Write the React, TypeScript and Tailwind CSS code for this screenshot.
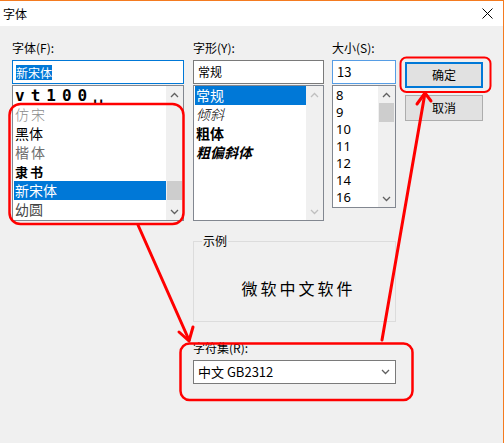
import React from "react";

function Chevron({ up, color }: { up?: boolean; color: string }) {
  return (
    <svg width="9" height="6" viewBox="0 0 9 6" className="block">
      <path
        d={up ? "M1 5 L4.5 1.5 L8 5" : "M1 1 L4.5 4.5 L8 1"}
        fill="none"
        stroke={color}
        strokeWidth="1.3"
      />
    </svg>
  );
}

function ScrollBar({
  color,
  thumbTop,
  thumb,
}: {
  color: string;
  thumbTop?: string;
  thumb?: boolean;
}) {
  return (
    <div className="flex w-[17px] shrink-0 flex-col bg-[#f0f0f0]">
      <div className="flex h-[17px] items-center justify-center">
        <Chevron up color={color} />
      </div>
      <div className="flex-1">
        {thumb && <div className={`${thumbTop} mx-[1px] h-[19px] bg-[#cdcdcd]`} />}
      </div>
      <div className="flex h-[17px] items-center justify-center">
        <Chevron color={color} />
      </div>
    </div>
  );
}

const fontItems = [
  { name: "仿宋", cls: "text-[#8a8a8a] font-light tracking-[2px]" },
  { name: "黑体", cls: "text-black" },
  { name: "楷体", cls: "text-[#6f6f6f] tracking-[2px]" },
  { name: "隶书", cls: "font-bold tracking-[2px] text-[13px]" },
  { name: "新宋体", cls: "bg-[#0078d7] text-white", selected: true },
  { name: "幼圆", cls: "text-[#444]" },
];

const styleItems = [
  { name: "常规", cls: "bg-[#0078d7] text-white" },
  { name: "倾斜", cls: "italic font-light" },
  { name: "粗体", cls: "font-bold" },
  { name: "粗偏斜体", cls: "font-bold italic" },
];

const sizes = ["8", "9", "10", "11", "12", "14", "16"];

export default function App() {
  return (
    <div className="relative h-[443px] w-[504px] overflow-hidden border-t border-r border-[#f47b20] bg-[#f0f0f0] font-['Noto_Sans_CJK_SC','Noto_Sans',sans-serif] text-[12px] leading-[16px] text-black">
      <div className="flex h-[25px] items-center justify-between bg-white pl-[3px] pr-[10px]">
        <span>字体</span>
        <svg width="11" height="11" viewBox="0 0 11 11">
          <path d="M0.5 0.5 L10.5 10.5 M10.5 0.5 L0.5 10.5" stroke="#000" strokeWidth="1" />
        </svg>
      </div>

      <div className="pl-[12px] pt-[14px]">
        <div className="flex">
          {/* font */}
          <div className="w-[172px]">
            <div className="mb-[4px] h-[16px]">字体(F):</div>
            <div className="flex h-[24px] items-center border border-[#0078d7] bg-white pl-[3px]">
              <span className="bg-[#0078d7] leading-[15px] text-white">新宋体</span>
            </div>
            <div className="mt-[1px] flex h-[136px] border border-[#828790] bg-white">
              <div className="flex-1 pl-[1px] text-[14px] leading-[19px]">
                <div className="h-[19px] overflow-hidden pl-[1px] font-['DejaVu_Sans_Mono',monospace] text-[16px] font-bold leading-[19px] tracking-[6px]">
                  vt100␣
                </div>
                {fontItems.map((f) => (
                  <div key={f.name} className={`h-[19px] pl-[1px] ${f.cls}`}>
                    {f.name}
                  </div>
                ))}
              </div>
              <ScrollBar color="#606060" thumb thumbTop="mt-[78px]" />
            </div>
          </div>

          {/* style */}
          <div className="ml-[9px] w-[131px]">
            <div className="mb-[4px] h-[16px]">字形(Y):</div>
            <div className="flex h-[24px] items-center border border-[#7a7a7a] bg-white pl-[4px]">
              常规
            </div>
            <div className="mt-[1px] flex h-[136px] border border-[#828790] bg-white">
              <div className="flex-1 pl-[1px] text-[14px] leading-[19px]">
                {styleItems.map((s) => (
                  <div key={s.name} className={`h-[19px] pl-[1px] ${s.cls}`}>
                    {s.name}
                  </div>
                ))}
              </div>
              <ScrollBar color="#bfbfbf" />
            </div>
          </div>

          {/* size */}
          <div className="ml-[8px] w-[64px]">
            <div className="mb-[4px] h-[16px]">大小(S):</div>
            <div className="flex h-[24px] items-center border border-[#569de5] bg-white pl-[4px] text-[13px]">
              13
            </div>
            <div className="mt-[1px] flex h-[123px] border border-[#828790] bg-white">
              <div className="flex-1 pl-[3px] pt-[1px] font-['Noto_Sans',sans-serif] text-[13px] leading-[17px]">
                {sizes.map((s) => (
                  <div key={s} className="h-[17px]">
                    {s}
                  </div>
                ))}
              </div>
              <ScrollBar color="#606060" thumb thumbTop="mt-0" />
            </div>
          </div>

          {/* buttons */}
          <div className="ml-[9px] mt-[22px] flex w-[78px] flex-col gap-[7px]">
            <button className="flex h-[26px] items-center justify-center border-2 border-[#0078d7] bg-[#e1e1e1]">
              确定
            </button>
            <button className="flex h-[26px] items-center justify-center border border-[#adadad] bg-[#e1e1e1]">
              取消
            </button>
          </div>
        </div>

        <div className="ml-[181px] mt-[12px] w-[203px]">
          <fieldset className="h-[89px] border border-[#dcdcdc] pl-[8px]">
            <legend className="px-[1px]">示例</legend>
            <div className="flex h-[72px] items-center justify-center pt-[6px] text-[16px] tracking-[3px]">
              微软中文软件
            </div>
          </fieldset>

          <div className="mt-[18px] h-[16px]">字符集(R):</div>
          <div className="mt-[4px] flex h-[24px] items-center justify-between border border-[#7a7a7a] bg-white pl-[4px] pr-[5px] text-[13px]">
            <span>中文 GB2312</span>
            <Chevron color="#606060" />
          </div>
        </div>
      </div>

      {/* red annotations */}
      <svg
        className="pointer-events-none absolute left-0 top-[-1px]"
        width="504"
        height="443"
        viewBox="0 0 504 443"
      >
        <g fill="none" stroke="#ff0000" strokeLinecap="round" strokeLinejoin="round">
          <rect x="9.5" y="104" width="174" height="120" rx="11" strokeWidth="2.5" />
          <rect x="400.5" y="57.5" width="90" height="34.5" rx="6" strokeWidth="2" />
          <rect x="180.5" y="343.5" width="232" height="56.5" rx="9" strokeWidth="2.5" />
          <path d="M138 225 L189 340" strokeWidth="3" />
          <path d="M179 332 L189 341 L193 327" strokeWidth="3" />
          <path d="M382 340 L425 93" strokeWidth="3" />
          <path d="M417 104 L425 93 L431 101" strokeWidth="3" />
        </g>
      </svg>
    </div>
  );
}
